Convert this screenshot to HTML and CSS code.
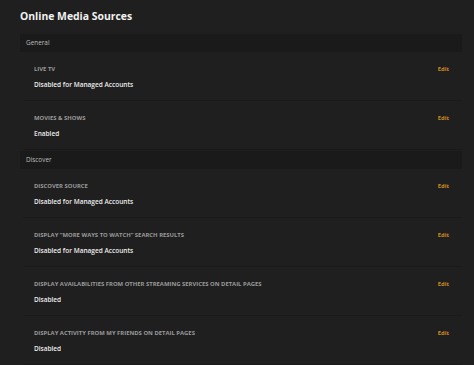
FILE: index.html
```html
<!DOCTYPE html>
<html lang="en">
<head>
<meta charset="utf-8">
<title>Online Media Sources</title>
<link rel="stylesheet" href="styles.css">
</head>
<body>
<div class="page">
  <h1 class="title">Online Media Sources</h1>

  <section class="group">
    <div class="group-head">General</div>
    <div class="item">
      <div class="item-top"><span class="label">LIVE TV</span><a class="edit">Edit</a></div>
      <div class="value">Disabled for Managed Accounts</div>
    </div>
    <div class="item">
      <div class="item-top"><span class="label">MOVIES &amp; SHOWS</span><a class="edit">Edit</a></div>
      <div class="value">Enabled</div>
    </div>
  </section>

  <section class="group">
    <div class="group-head">Discover</div>
    <div class="item">
      <div class="item-top"><span class="label">DISCOVER SOURCE</span><a class="edit">Edit</a></div>
      <div class="value">Disabled for Managed Accounts</div>
    </div>
    <div class="item">
      <div class="item-top"><span class="label">DISPLAY “MORE WAYS TO WATCH” SEARCH RESULTS</span><a class="edit">Edit</a></div>
      <div class="value">Disabled for Managed Accounts</div>
    </div>
    <div class="item">
      <div class="item-top"><span class="label">DISPLAY AVAILABILITIES FROM OTHER STREAMING SERVICES ON DETAIL PAGES</span><a class="edit">Edit</a></div>
      <div class="value">Disabled</div>
    </div>
    <div class="item">
      <div class="item-top"><span class="label">DISPLAY ACTIVITY FROM MY FRIENDS ON DETAIL PAGES</span><a class="edit">Edit</a></div>
      <div class="value">Disabled</div>
    </div>
  </section>
</div>
</body>
</html>
```

FILE: styles.css
```css
html, body {
  margin: 0;
  padding: 0;
  background: #1f1f1f;
  height: 100%;
  overflow: hidden;
}

body {
  font-family: "Open Sans", "Liberation Sans", sans-serif;
  color: #e6e6e6;
}

.page {
  padding: 0 12px 0 20px;
}

.title {
  margin: 0;
  padding-top: 9px;
  padding-bottom: 11px;
  font-size: 10.4px;
  line-height: 14px;
  font-weight: 700;
  color: #f2f2f2;
}

.group {
  display: flex;
  flex-direction: column;
}

.group + .group .group-head {
  margin-top: 1px;
}

.group-head {
  height: 18px;
  line-height: 18px;
  padding-left: 6px;
  background: #1a1a1a;
  font-size: 6.4px;
  color: #bdbdbd;
}

.item {
  margin-left: 3px;
  padding: 14px 13px 11px 11px;
  border-bottom: 1px solid #1a1a1a;
  display: flex;
  flex-direction: column;
  gap: 7px;
}

.item-top {
  display: flex;
  justify-content: space-between;
  align-items: center;
  height: 7px;
}

.label {
  font-size: 5.9px;
  line-height: 7px;
  font-weight: 700;
  color: #9a9a9a;
}

.edit {
  font-size: 5.8px;
  line-height: 7px;
  font-weight: 700;
  color: #cc8a22;
}

.value {
  font-size: 6.5px;
  line-height: 9px;
  font-weight: 600;
  color: #ececec;
}
```
